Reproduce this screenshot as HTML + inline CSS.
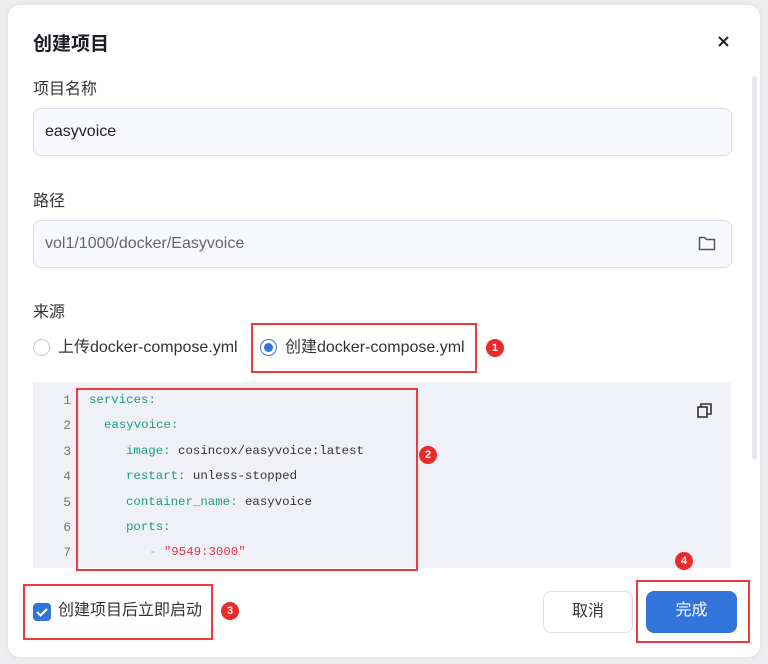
<!DOCTYPE html>
<html><head><meta charset="utf-8"><style>
*{box-sizing:border-box;margin:0;padding:0}
body{width:768px;height:664px;background:#eeeef0;position:relative;overflow:hidden;font-family:"Liberation Sans","Noto Sans CJK SC",sans-serif;color:#222}
.dlg{position:absolute;left:8px;top:5px;width:752px;height:652px;background:#fff;border-radius:12px;box-shadow:0 0 6px rgba(0,0,0,.08)}
.a{position:absolute}
.lbl{font-size:16px;color:#333;line-height:20px}
.inp{position:absolute;left:33px;width:699px;height:48px;border:1px solid #dcdce6;border-radius:8px;background:#f8f9fc;font-size:16px;padding-left:11px;line-height:46px}
.red{position:absolute;border:2px solid #ee3a3a}
.badge{position:absolute;width:18px;height:18px;border-radius:50%;background:#ec2a2a;color:#fff;font-size:11px;text-align:center;line-height:18px;font-weight:bold}
.code{position:absolute;left:33px;top:382px;width:698px;height:186px;background:#f0f1f6}
.ln{position:absolute;left:0;width:38px;text-align:right;font-family:"Liberation Mono",monospace;font-size:13px;color:#777}
.cl{position:absolute;font-family:"Liberation Mono",monospace;font-size:12.4px;color:#333;white-space:pre}
.k{color:#179c8a}
.s{color:#e0334a}
.btn{position:absolute;top:591px;height:42px;border-radius:8px;font-size:16px;text-align:center;line-height:40px}
</style></head><body>
<div class="dlg"></div>
<div class="a" style="left:33px;top:29px;font-size:19px;font-weight:bold;color:#1d1d24">创建项目</div>
<svg class="a" style="left:718px;top:36px" width="11" height="11" viewBox="0 0 11 11"><path d="M1 1L10 10M10 1L1 10" stroke="#222" stroke-width="2"/></svg>
<div class="a" style="left:752px;top:76px;width:5px;height:384px;background:#e8e9ef;border-radius:3px"></div>
<div class="a lbl" style="left:33px;top:80px">项目名称</div>
<div class="inp" style="top:108px;color:#222">easyvoice</div>
<div class="a lbl" style="left:33px;top:192px">路径</div>
<div class="inp" style="top:220px;color:#666">vol1/1000/docker/Easyvoice</div>
<svg class="a" style="left:698px;top:236px" width="18" height="15" viewBox="0 0 18 15"><path d="M1.5 1.5h5l2 2h8v10h-15z" fill="none" stroke="#555" stroke-width="1.5"/></svg>
<div class="a lbl" style="left:33px;top:303px">来源</div>
<div class="a" style="left:33px;top:339px;width:17px;height:17px;border:1px solid #ccc;border-radius:50%"></div>
<div class="a lbl" style="left:58px;top:338px;color:#333">上传docker-compose.yml</div>
<div class="a" style="left:260px;top:339px;width:17px;height:17px;border:1px solid #3374db;border-radius:50%"><div style="margin:3px;width:9px;height:9px;border-radius:50%;background:#3374db"></div></div>
<div class="a lbl" style="left:285px;top:338px;color:#333">创建docker-compose.yml</div>
<div class="red" style="left:251px;top:323px;width:226px;height:50px"></div>
<div class="badge" style="left:486px;top:339px">1</div>
<div class="code">
<div class="ln" style="top:11px">1</div><div class="ln" style="top:36px">2</div><div class="ln" style="top:62px">3</div><div class="ln" style="top:87px">4</div><div class="ln" style="top:113px">5</div><div class="ln" style="top:138px">6</div><div class="ln" style="top:163px">7</div>
<div class="cl k" style="left:56px;top:11px">services:</div>
<div class="cl k" style="left:71px;top:36px">easyvoice:</div>
<div class="cl" style="left:93px;top:62px"><span class="k">image:</span> cosincox/easyvoice:latest</div>
<div class="cl" style="left:93px;top:87px"><span class="k">restart:</span> unless-stopped</div>
<div class="cl" style="left:93px;top:113px"><span class="k">container_name:</span> easyvoice</div>
<div class="cl k" style="left:93px;top:138px">ports:</div>
<div class="cl" style="left:116px;top:163px"><span style="color:#9bb">-</span> <span class="s">"9549:3000"</span></div>
</div>
<svg class="a" style="left:697px;top:403px" width="15" height="15" viewBox="0 0 15 15"><rect x="1" y="4" width="9" height="10" fill="none" stroke="#333" stroke-width="1.6"/><path d="M4 4V1h10v10h-4" fill="none" stroke="#333" stroke-width="1.6"/></svg>
<div class="red" style="left:76px;top:388px;width:342px;height:183px"></div>
<div class="badge" style="left:419px;top:446px">2</div>
<div class="a" style="left:33px;top:603px;width:18px;height:18px;border-radius:4px;background:#3374db"><svg width="18" height="18"><path d="M4 9l3.5 3.5L14 6" fill="none" stroke="#fff" stroke-width="2"/></svg></div>
<div class="a lbl" style="left:58px;top:601px;color:#333">创建项目后立即启动</div>
<div class="red" style="left:23px;top:584px;width:190px;height:56px"></div>
<div class="badge" style="left:221px;top:602px">3</div>
<div class="btn" style="left:543px;width:90px;border:1px solid #dcdce4;color:#333;background:#fff">取消</div>
<div class="btn" style="left:646px;width:91px;background:#3374db;color:#fff">完成</div>
<div class="red" style="left:636px;top:580px;width:114px;height:63px"></div>
<div class="badge" style="left:675px;top:552px">4</div>
</body></html>
